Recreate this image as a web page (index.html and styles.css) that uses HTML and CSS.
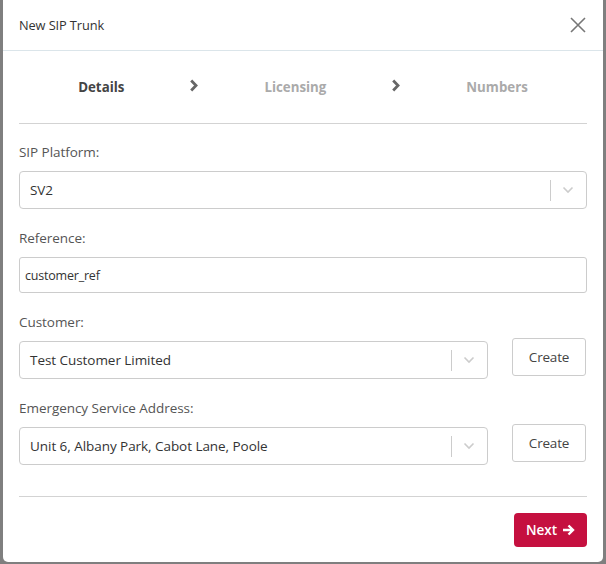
FILE: index.html
```html
<!DOCTYPE html>
<html lang="en">
<head>
<meta charset="utf-8">
<title>New SIP Trunk</title>
<link rel="stylesheet" href="styles.css">
</head>
<body>
<div class="modal">
  <div class="modal-header">
    <span class="modal-title">New SIP Trunk</span>
    <svg class="close" width="16" height="16" viewBox="0 0 16 16"><path d="M1 1L15 15M15 1L1 15" stroke="#777" stroke-width="1.6" fill="none"/></svg>
  </div>
  <div class="modal-body">
    <div class="steps">
      <span class="step active">Details</span>
      <svg class="step-sep" width="10" height="13" viewBox="0 0 10 13"><path d="M2.2 1.6L7 6.5L2.2 11.4" stroke="#666" stroke-width="2.8" fill="none"/></svg>
      <span class="step">Licensing</span>
      <svg class="step-sep" width="10" height="13" viewBox="0 0 10 13"><path d="M2.2 1.6L7 6.5L2.2 11.4" stroke="#666" stroke-width="2.8" fill="none"/></svg>
      <span class="step">Numbers</span>
    </div>
    <div class="divider"></div>

    <div class="group first">
      <div class="label">SIP Platform:</div>
      <div class="select">
        <span class="value">SV2</span>
        <span class="indicator"><span class="bar"></span><svg width="12" height="8" viewBox="0 0 12 8"><path d="M1.5 1.5L6 6L10.5 1.5" stroke="#ccc" stroke-width="1.6" fill="none"/></svg></span>
      </div>
    </div>

    <div class="group">
      <div class="label">Reference:</div>
      <div class="input">customer_ref</div>
    </div>

    <div class="group">
      <div class="label">Customer:</div>
      <div class="row">
        <div class="select grow">
          <span class="value">Test Customer Limited</span>
          <span class="indicator"><span class="bar"></span><svg width="12" height="8" viewBox="0 0 12 8"><path d="M1.5 1.5L6 6L10.5 1.5" stroke="#ccc" stroke-width="1.6" fill="none"/></svg></span>
        </div>
        <button class="btn-create">Create</button>
      </div>
    </div>

    <div class="group">
      <div class="label">Emergency Service Address:</div>
      <div class="row">
        <div class="select grow">
          <span class="value">Unit 6, Albany Park, Cabot Lane, Poole</span>
          <span class="indicator"><span class="bar"></span><svg width="12" height="8" viewBox="0 0 12 8"><path d="M1.5 1.5L6 6L10.5 1.5" stroke="#ccc" stroke-width="1.6" fill="none"/></svg></span>
        </div>
        <button class="btn-create">Create</button>
      </div>
    </div>

    <div class="divider footer-div"></div>
    <div class="footer">
      <button class="btn-next">Next <svg width="13" height="12" viewBox="0 0 13 12"><path d="M1 6H11M6.5 1.5L11 6L6.5 10.5" stroke="#fff" stroke-width="2.4" fill="none"/></svg></button>
    </div>
  </div>
</div>
</body>
</html>
```

FILE: styles.css
```css
html, body {
  margin: 0;
  padding: 0;
}
body {
  width: 606px;
  height: 564px;
  background: #7f7f7f;
  overflow: hidden;
  font-family: "Open Sans", "Noto Sans", sans-serif;
  color: #444;
}
.modal {
  margin: 0 3px;
  width: 600px;
  height: 562px;
  background: #fff;
  border-radius: 0 0 5px 5px;
}
.modal-header {
  height: 50px;
  border-bottom: 1px solid #dbe5ea;
  display: flex;
  align-items: center;
  justify-content: space-between;
  padding: 0 17px 0 16px;
}
.modal-title {
  font-size: 12.8px;
  color: #333;
  letter-spacing: -0.1px;
}
.close {
  display: block;
}
.modal-body {
  padding: 0 16px;
}
.steps {
  height: 72px;
  display: flex;
  align-items: center;
  justify-content: center;
  gap: 65px;
}
.step {
  font-size: 13.3px;
  font-weight: 700;
  color: #aaa;
  letter-spacing: 0;
}
.step.active {
  color: #444;
}
.step-sep {
  display: block;
  margin-top: -3px;
}
.divider {
  border-top: 1px solid #d3d3d3;
}
.group {
  margin-top: 19px;
}
.group.first {
  margin-top: 18px;
}
.label {
  font-size: 13.5px;
  line-height: 20px;
  color: #555;
  margin-bottom: 9px;
  letter-spacing: -0.05px;
}
.select {
  box-sizing: border-box;
  height: 38px;
  border: 1px solid #ccc;
  border-radius: 4px;
  display: flex;
  align-items: center;
  justify-content: space-between;
  padding-left: 10px;
}
.value {
  font-size: 13.5px;
  color: #333;
  letter-spacing: -0.05px;
}
.indicator {
  display: flex;
  align-items: center;
  height: 100%;
}
.bar {
  width: 1px;
  height: 21px;
  background: #ccc;
  margin-right: 11px;
}
.indicator svg {
  display: block;
  margin-right: 12px;
}
.input {
  box-sizing: border-box;
  height: 36px;
  border: 1px solid #ccc;
  border-radius: 3px;
  padding-left: 5px;
  display: flex;
  align-items: center;
  font-size: 12.5px;
  color: #333;
  letter-spacing: -0.2px;
}
.row {
  display: flex;
  align-items: flex-start;
  gap: 24px;
}
.grow {
  flex: 1;
}
.btn-create {
  box-sizing: border-box;
  width: 74px;
  height: 38px;
  margin-top: -3px;
  margin-right: 1px;
  border: 1px solid #ccc;
  border-radius: 3px;
  background: #fff;
  font-family: inherit;
  font-size: 13.5px;
  color: #444;
  letter-spacing: -0.2px;
  padding: 0;
}
.footer-div {
  margin-top: 31px;
}
.footer {
  display: flex;
  justify-content: flex-end;
  padding-top: 16px;
}
.btn-next {
  box-sizing: border-box;
  width: 73px;
  height: 34px;
  border: none;
  border-radius: 4px;
  background: #c5103f;
  color: #fff;
  font-family: inherit;
  font-size: 13.5px;
  font-weight: 600;
  display: flex;
  align-items: center;
  justify-content: center;
  gap: 5px;
  padding: 0;
}
.btn-next svg {
  display: block;
}
```
